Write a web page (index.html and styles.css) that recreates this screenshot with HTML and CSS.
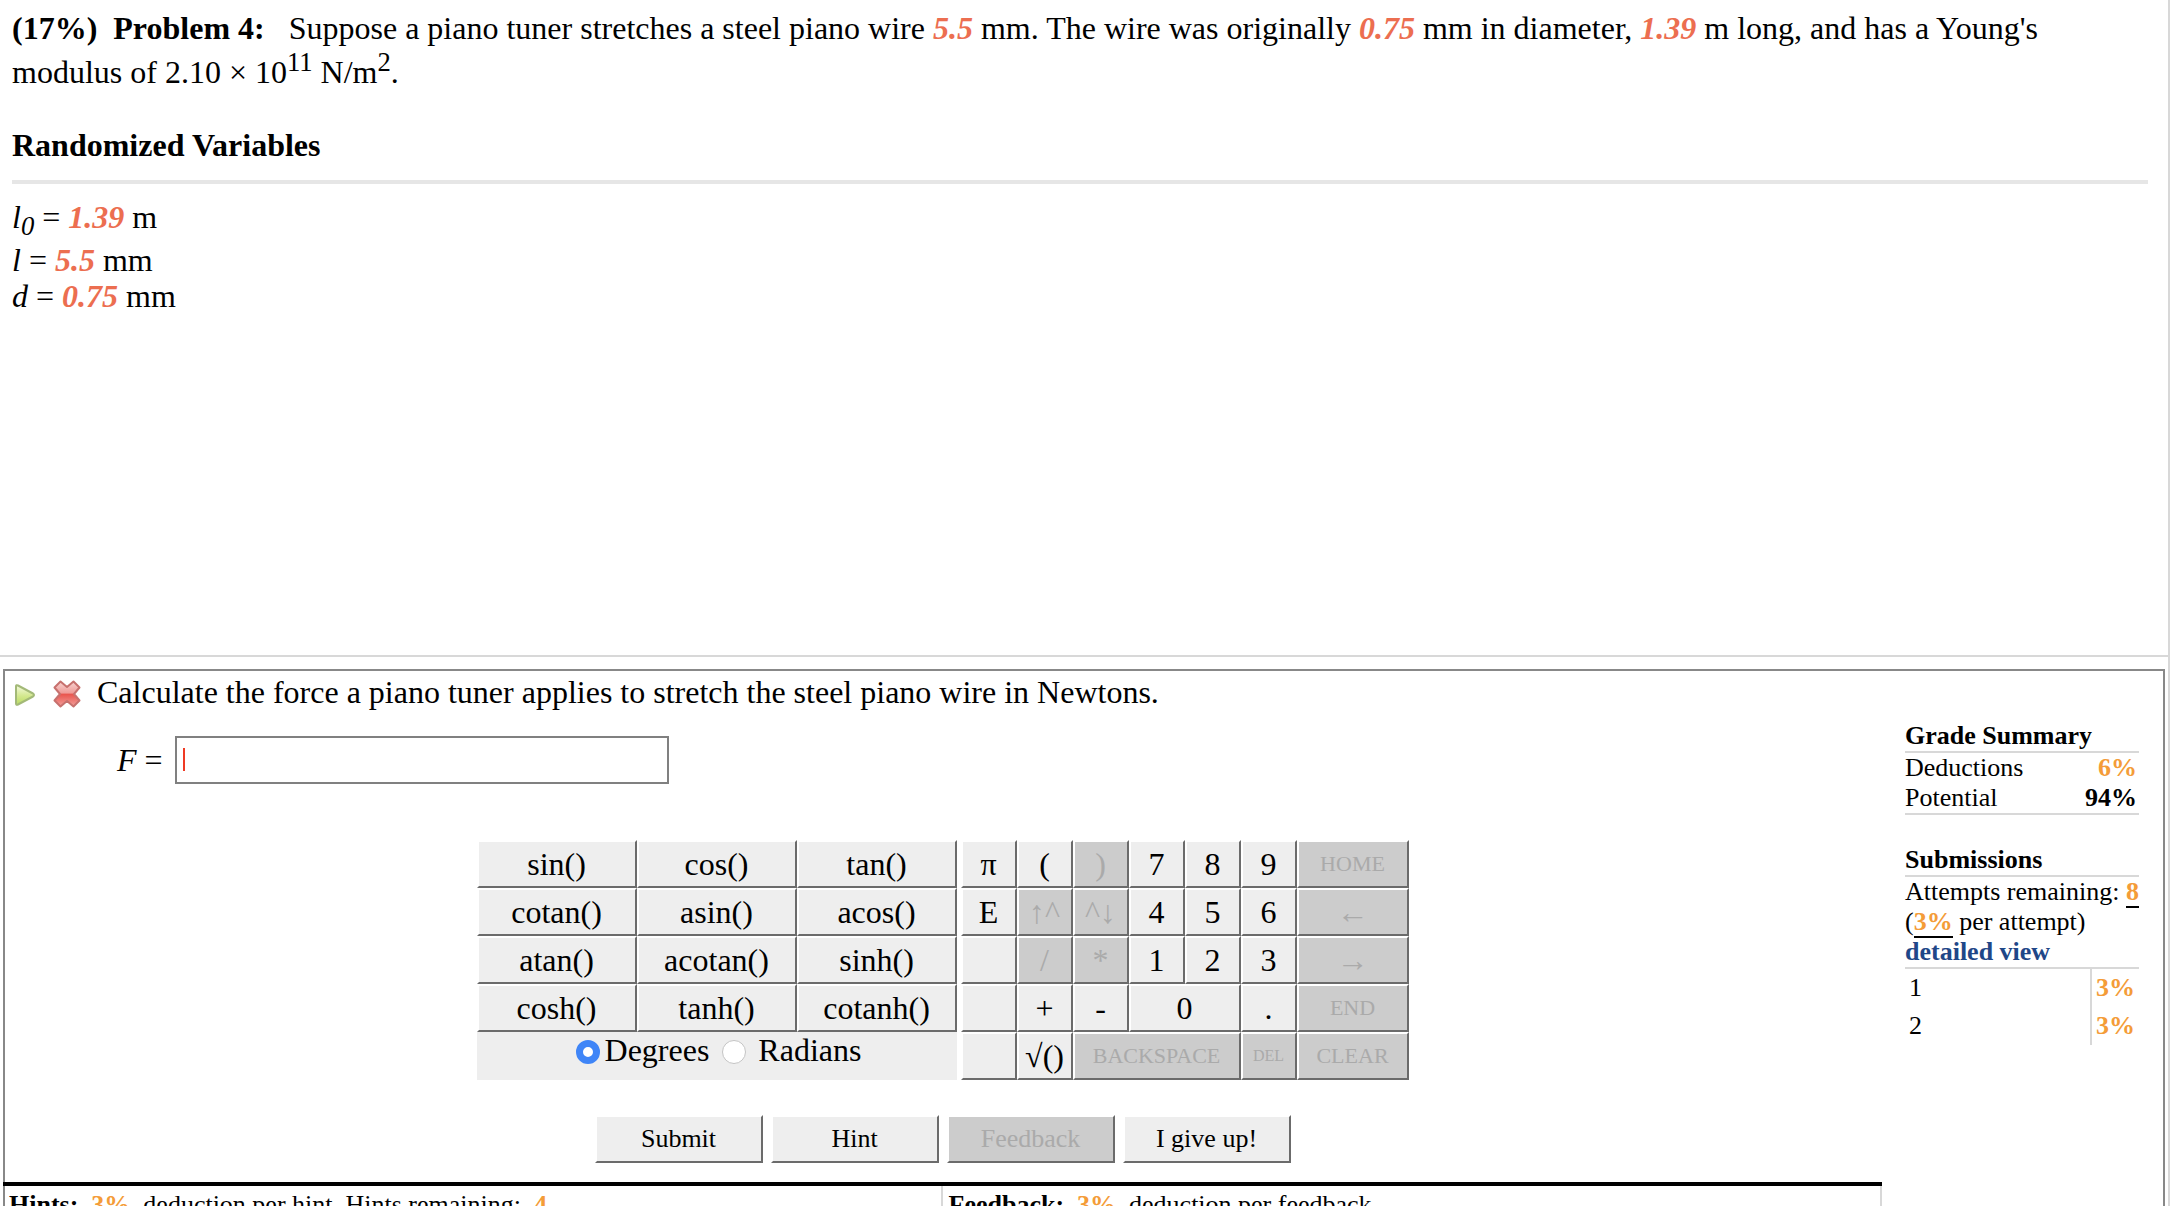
FILE: index.html
```html
<!DOCTYPE html>
<html lang="en">
<head>
<meta charset="utf-8">
<title>Problem 4</title>
<link rel="stylesheet" href="styles.css">
</head>
<body>
<main class="page">
  <section class="problem">
    <p class="statement"><b>(17%)&nbsp; Problem 4:</b> &nbsp; Suppose a piano tuner stretches a steel piano wire <em class="value">5.5</em> mm. The wire was originally <em class="value">0.75</em> mm in diameter, <em class="value">1.39</em> m long, and has a Young's modulus of 2.10 × 10<sup>11</sup> N/m<sup>2</sup>.</p>
    <h2 class="variables-title">Randomized Variables</h2>
    <hr class="rule">
    <div class="variables">
      <div><i>l<sub>0</sub></i> = <em class="value">1.39</em> m</div>
      <div><i>l</i> = <em class="value">5.5</em> mm</div>
      <div><i>d</i> = <em class="value">0.75</em> mm</div>
    </div>
  </section>

  <section class="part">
    <div class="work">
      <div class="question">
        <svg class="icon-play" width="22" height="24" viewBox="0 0 22 24" aria-hidden="true">
          <defs><linearGradient id="green" x1="0" y1="0" x2="0" y2="1"><stop offset="0" stop-color="#f4fae0"/><stop offset=".55" stop-color="#d3e88e"/><stop offset="1" stop-color="#b9db62"/></linearGradient></defs>
          <path d="M2 3.500Q2 1.500 4 2.500L19 10.500Q21 12 19 13.500L4 21.500Q2 22.500 2 20.500Z" fill="url(#green)" stroke="#a3b978" stroke-width="2" stroke-linejoin="round"/>
        </svg>
        <svg class="icon-wrong" width="28" height="28" viewBox="0 0 28 28" aria-hidden="true">
          <defs><linearGradient id="red" x1="0" y1="0" x2="0" y2="1"><stop offset="0" stop-color="#f7d4d2"/><stop offset=".45" stop-color="#ef9c98"/><stop offset=".52" stop-color="#e95750"/><stop offset="1" stop-color="#f2a09c"/></linearGradient></defs>
          <path d="M7.500 1.500L14 7L20.500 1.500L26.500 7.500L21 14L26.500 20.500L20.500 26.500L14 21L7.500 26.500L1.500 20.500L7 14L1.500 7.500Z" fill="url(#red)" stroke="#c7716e" stroke-width="2" stroke-linejoin="round"/>
        </svg>
        <span>Calculate the force a piano tuner applies to stretch the steel piano wire in Newtons.</span>
      </div>
      <div class="answer">
        <label for="answer"><i>F</i> =</label>
        <input class="answer-box" id="answer" type="text">
      </div>
      <div class="keypad">
        <div class="functions">
          <button class="key">sin()</button><button class="key">cos()</button><button class="key">tan()</button>
          <button class="key">cotan()</button><button class="key">asin()</button><button class="key">acos()</button>
          <button class="key">atan()</button><button class="key">acotan()</button><button class="key">sinh()</button>
          <button class="key">cosh()</button><button class="key">tanh()</button><button class="key">cotanh()</button>
          <div class="units">
            <input class="radio" type="radio" name="unit" id="degrees" checked><label for="degrees">Degrees</label>
            <input class="radio radio-second" type="radio" name="unit" id="radians"><label class="label-second" for="radians">Radians</label>
          </div>
        </div>
        <div class="numbers">
          <button class="key">π</button><button class="key">(</button><button class="key" disabled>)</button><button class="key">7</button><button class="key">8</button><button class="key">9</button><button class="key wide small" disabled>HOME</button>
          <button class="key">E</button><button class="key" disabled>↑^</button><button class="key" disabled>^↓</button><button class="key">4</button><button class="key">5</button><button class="key">6</button><button class="key wide" disabled>←</button>
          <button class="key" aria-label="Blank"></button><button class="key" disabled>/</button><button class="key" disabled>*</button><button class="key">1</button><button class="key">2</button><button class="key">3</button><button class="key wide" disabled>→</button>
          <button class="key" aria-label="Blank"></button><button class="key">+</button><button class="key">-</button><button class="key wide">0</button><button class="key">.</button><button class="key wide small" disabled>END</button>
          <button class="key" aria-label="Blank"></button><button class="key">√()</button><button class="key wider small" disabled>BACKSPACE</button><button class="key tiny" disabled>DEL</button><button class="key wide small" disabled>CLEAR</button>
        </div>
      </div>
      <div class="actions">
        <button class="key action">Submit</button>
        <button class="key action">Hint</button>
        <button class="key action" disabled>Feedback</button>
        <button class="key action">I give up!</button>
      </div>
      <div class="help">
        <div class="help-cell"><b>Hints:</b><b class="orange gap">3%</b><span class="gap">deduction per hint. Hints remaining:</span><b class="orange gap">4</b></div>
        <div class="help-cell"><b>Feedback:</b><b class="orange gap">3%</b><span class="gap">deduction per feedback.</span></div>
      </div>
    </div>

    <aside class="summary">
      <h3 class="summary-title">Grade Summary</h3>
      <div class="totals">
        <div class="total"><span>Deductions</span><b class="orange">6%</b></div>
        <div class="total"><span>Potential</span><b>94%</b></div>
      </div>
      <h3 class="summary-title">Submissions</h3>
      <div>Attempts remaining: <b class="orange underlined">8</b></div>
      <div>(<b class="orange underlined">3%</b> per attempt)</div>
      <a class="detail" href="#detail">detailed view</a>
      <table class="attempts">
        <tr><td>1</td><td class="deduction">3%</td></tr>
        <tr><td>2</td><td class="deduction">3%</td></tr>
      </table>
    </aside>
  </section>
</main>
</body>
</html>
```
FILE: styles.css
```css
* {
  box-sizing: border-box;
}

body {
  margin: 0;
  background: #fff;
  color: #000;
  font: 32px/36px "Liberation Serif", "Times New Roman", serif;
}

.page {
  height: 100vh;
  overflow: hidden;
  display: flex;
  flex-direction: column;
  margin-right: 4px;
  border-right: 2px solid #d8d8d8;
}

.problem {
  flex: none;
  min-height: 657px;
  padding: 10px 20px 0 12px;
  border-bottom: 2px solid #d8d8d8;
}

.statement {
  margin: 0;
}

sup,
sub {
  line-height: 32px;
}

.value {
  color: #ec6e50;
  font-weight: bold;
}

.variables-title {
  margin: 37px 0 0;
  font-size: 32px;
}

.rule {
  height: 4px;
  margin: 17px 0 15px;
  border: 0;
  background: #e6e6e6;
}

.part {
  flex: none;
  display: flex;
  margin: 12px 3px 0;
  border: 2px solid #888;
}

.work {
  flex: 1;
}

.question {
  display: flex;
  padding-top: 3px;
}

.icon-play {
  margin: 9px 17px 0 9px;
}

.icon-wrong {
  margin: 6px 16px 0 0;
}

.answer {
  display: flex;
  align-items: center;
  gap: 12px;
  margin: 26px 0 0 112px;
}

.answer-box {
  width: 494px;
  height: 48px;
  padding: 0 6px;
  border: 2px solid #808080;
  background: linear-gradient(#ef3a24, #ef3a24) 6px 10px / 2px 23px no-repeat #fff;
  caret-color: #ef3a24;
  font: inherit;
}

.keypad {
  display: flex;
  justify-content: center;
  gap: 4px;
  margin-top: 56px;
  padding-right: 2px;
}

.functions,
.numbers {
  display: grid;
  grid-auto-rows: 48px;
}

.functions {
  grid-template-columns: repeat(3, 160px);
}

.numbers {
  grid-template-columns: repeat(8, 56px);
}

.key {
  padding: 0;
  border: 2px solid;
  border-color: #fff #6b6b6b #6b6b6b #fff;
  background: #eee;
  color: #000;
  font: inherit;
  white-space: nowrap;
}

.key:disabled {
  background: #ccc;
  color: #aaa;
}

.wide {
  grid-column: span 2;
}

.wider {
  grid-column: span 3;
}

.small {
  font-size: 22px;
}

.tiny {
  font-size: 16px;
}

.units {
  grid-column: span 3;
  display: flex;
  justify-content: center;
  align-items: flex-start;
  padding-left: 4px;
  background: #eee;
}

.radio {
  appearance: none;
  width: 24px;
  height: 24px;
  margin: 8px 5px 0 0;
  border: 1px solid #c4c4c4;
  border-radius: 50%;
  background: #fff;
}

.radio:checked {
  border: 7px solid #3f85f7;
}

.radio-second {
  margin-left: 13px;
}

.label-second {
  margin-left: 7px;
}

.actions {
  display: flex;
  justify-content: center;
  gap: 8px;
  margin-top: 35px;
  padding-right: 2px;
}

.action {
  width: 168px;
  height: 48px;
  margin: 0;
  font-size: 26px;
}

.help {
  display: flex;
  margin: 19px 0 0 -2px;
  border-top: 4px solid #000;
  font-size: 26px;
  line-height: 30px;
}

.help-cell {
  flex: 1;
  padding: 4px 6px;
  border-right: 2px solid #d8d8d8;
}

.orange {
  color: #f49c38;
}

.gap {
  margin-left: 13px;
}

.summary {
  flex: none;
  width: 234px;
  margin: 50px 24px 0 23px;
  font-size: 26px;
  line-height: 30px;
  white-space: nowrap;
}

.summary-title {
  margin: 0;
  border-bottom: 2px solid #d8d8d8;
  font-size: 26px;
}

.totals {
  margin-bottom: 30px;
  border-bottom: 2px solid #d8d8d8;
}

.total {
  display: flex;
  justify-content: space-between;
  padding-right: 2px;
}

.underlined {
  border-bottom: 2px solid #000;
}

.detail {
  display: block;
  border-bottom: 2px solid #d8d8d8;
  color: #1f4788;
  font-weight: bold;
  text-decoration: none;
}

.attempts {
  width: 100%;
  border-collapse: separate;
  border-spacing: 0;
}

.attempts td {
  padding: 4px;
}

.attempts .deduction {
  width: 49px;
  border-left: 2px solid #d8d8d8;
  color: #f49c38;
  font-weight: bold;
}
```
